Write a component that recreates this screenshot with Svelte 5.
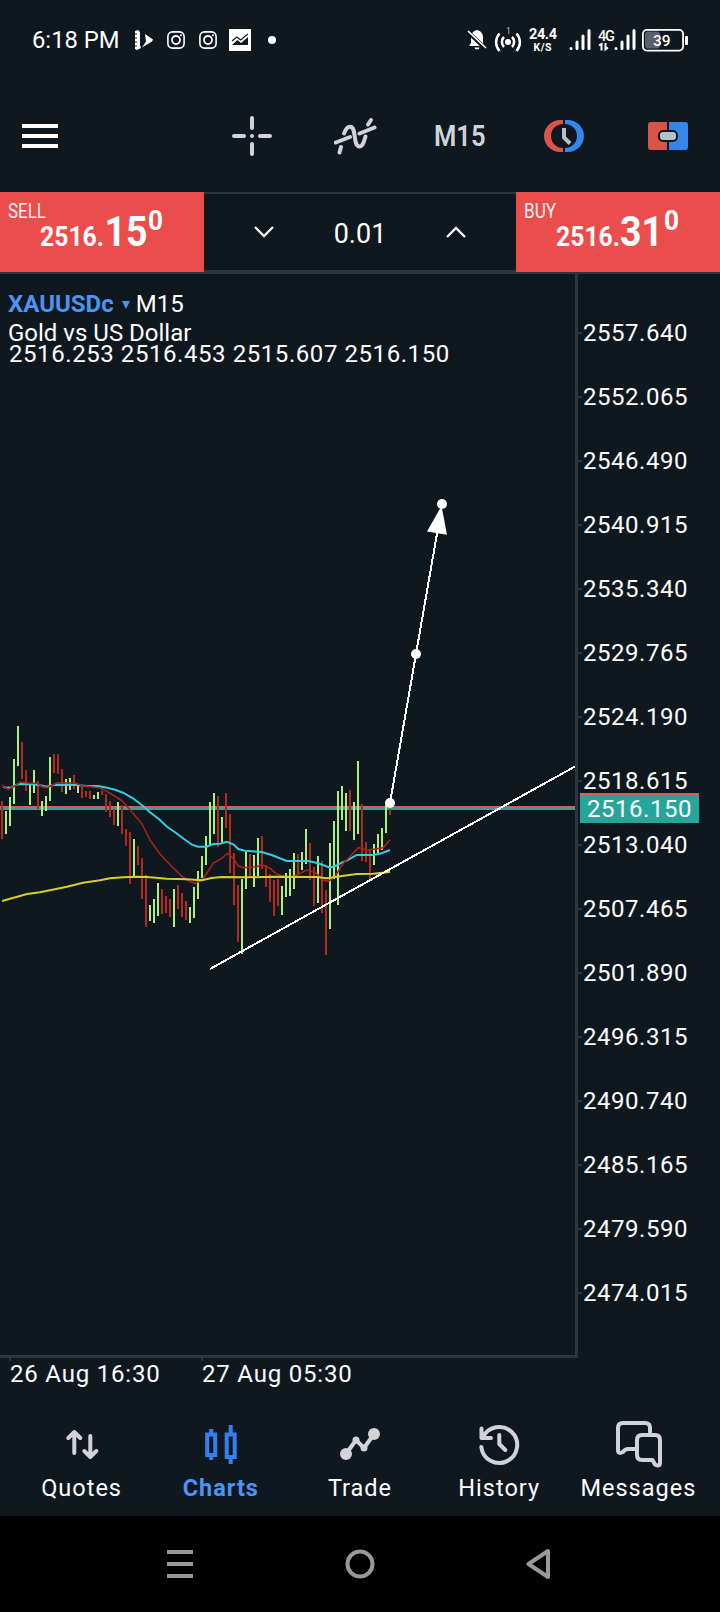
<script lang="ts">
	interface Tab {
		id: string;
		label: string;
	}

	const priceLabels = Array.from({ length: 16 }, (_, i) => (2557.64 - i * 5.575).toFixed(3));

	const tabs: Tab[] = [
		{ id: 'quotes', label: 'Quotes' },
		{ id: 'charts', label: 'Charts' },
		{ id: 'trade', label: 'Trade' },
		{ id: 'history', label: 'History' },
		{ id: 'messages', label: 'Messages' }
	];

	let activeTab = $state('charts');

	const sides = [
		{ label: 'SELL', labelWidth: 38, big: '15', bigX: 104.5, bigWidth: 43 },
		{ label: 'BUY', labelWidth: 32, big: '31', bigX: 104, bigWidth: 43 }
	];

	// direction, high, low (pixels below the top of the bar layer), one bar every 4px
	const bars = `
		r101-139 g111-134 g97-126 g59-104 g26-66 r42-79 r70-91 g84-105 g70-93 r81-109
		g101-116 g96-111 g57-101 r54-73 r54-74 r69-92 g79-94 g78-90 r75-89 g85-93
		r87-98 r91-97 r91-99 g95-99 g92-99 r91-95 r94-112 r101-117 r109-125 g102-126
		r105-134 r129-146 r132-184 g139-176 r146-165 r158-199 r175-227 g205-221 g199-223 g183-216
		r189-214 r196-213 r199-217 g189-227 r185-209 r193-217 r201-220 g207-223 g187-218 g171-199
		g156-178 g136-165 g102-146 g93-134 r96-147 g117-142 r93-128 r114-173 r153-205 r185-242
		g179-254 g152-189 r154-176 g155-187 g138-176 r136-169 r165-187 r174-202 r180-216 r179-206
		g186-215 g173-197 g169-196 g153-189 r154-174 g152-170 g129-164 r143-180 r167-206 g156-203
		r161-213 r190-255 g143-229 g121-179 g91-205 g86-120 g93-131 r90-131 g102-140 g61-134
		r104-161 r142-162 r149-181 g144-165 g134-155 g128-150 g105-133 r109-115`
		.trim()
		.split(/\s+/)
		.map((bar, i) => {
			const [high, low] = bar.slice(1).split('-').map(Number);
			return { up: bar[0] === 'g', x: i * 4 + 1, high, low };
		});
</script>

<div class="screen">
	<div class="status">
		<span class="time">6:18 PM</span>
		<svg class="bing" width="20" height="22" viewBox="0 0 20 22">
			<path d="M1 2 L4 1 L6 3 V16 L7 19 L3 21 L1 20Z" fill="#fff" />
			<path d="M0 5h3M0 9h3M0 13h3M0 17h3" stroke="#0f171f" />
			<path d="M11 5 L19 10.500 L18 12.500 L8 18.500 L12 12.500Z" fill="#fff" />
		</svg>
		{#each [0, 1] as n (n)}
			<svg class="insta" width="18" height="18" viewBox="0 0 18 18" fill="none" stroke="#fff">
				<rect x="0.9" y="0.9" width="16.2" height="16.2" rx="4.5" stroke-width="1.6" />
				<circle cx="9" cy="9" r="4" stroke-width="1.8" />
				<circle cx="14" cy="4.2" r="1" fill="#fff" stroke="none" />
			</svg>
		{/each}
		<svg width="22" height="22" viewBox="0 0 22 22">
			<rect width="22" height="22" fill="#fff" />
			<path d="M3 12 L8 8 L11.5 11 L19 5" fill="none" stroke="#0f171f" stroke-width="1.2" />
			<path d="M3 16 L8.5 11 L12 14 L19 8 V16Z" fill="#0f171f" />
		</svg>
		<i class="dot"></i>

		<div class="status-right">
			<svg width="22" height="24" viewBox="0 0 22 24">
				<path d="M11 2c-4 1-6 4-6 7v6l-2 3h16l-2-3V9c0-3-2-6-6-7zM8.500 19.500a2.500 2 0 0 0 5 0z" fill="#fff" />
				<path d="M2 4 L20 21" stroke="#0f171f" stroke-width="4" />
				<path d="M2 3 L20 20" stroke="#fff" stroke-width="1.700" />
			</svg>
			<svg class="hotspot" width="30" height="28" viewBox="0 0 30 28" fill="none" stroke="#fff" stroke-width="2.500">
				<circle cx="15" cy="16" r="3" fill="#fff" stroke="none" />
				<path d="M11 11a7 7 0 0 0 0 10M19 11a7 7 0 0 1 0 10M6.500 7.500a13 13 0 0 0 0 17.500M23.500 7.500a13 13 0 0 1 0 17.500" />
				<text x="13" y="8" font-size="8.500" fill="#bbc" stroke="none">1</text>
			</svg>
			<svg class="speed" width="32" height="28" viewBox="0 0 32 28" fill="#fff" font-weight="700">
				<text x="2" y="14" font-size="14.500" textLength="28">24.4</text>
				<text x="6.500" y="25.500" font-size="10.500" textLength="18">K/S</text>
			</svg>
			<svg class="signal" width="22" height="22" viewBox="0 0 22 22" stroke="#fff" stroke-width="3" stroke-linecap="round">
				<path d="M2 19.500v0M8 13v6.500M14 7v12.500M20 1.500v18" />
			</svg>
			<svg class="lte" width="38" height="24" viewBox="0 0 38 24">
				<text x="0" y="12.500" font-size="14.500" font-weight="500" fill="#fff" textLength="17">4G</text>
				<path d="M3.500 22.500v-6.500l-2.500 1.500M7.500 15v6.500l2.500-2" fill="none" stroke="#fff" stroke-width="2" />
				<path d="M18 20.500v0M24 14v6.500M30 8v12.500M36 2.500v18" stroke="#fff" stroke-width="3" stroke-linecap="round" />
			</svg>
			<svg class="battery" width="46" height="24" viewBox="0 0 46 24">
				<rect x="3" y="3.500" width="15" height="17" rx="3" fill="#596067" />
				<rect x="0.900" y="1.900" width="40.200" height="20.700" rx="4" fill="none" stroke="#fff" stroke-width="1.800" />
				<rect x="43" y="8" width="3" height="9" rx="1" fill="#fff" />
				<text x="11" y="17.700" font-size="15.500" font-weight="500" fill="#fff">39</text>
			</svg>
		</div>
	</div>

	<div class="toolbar">
		<button class="menu" aria-label="Menu"><i></i><i></i><i></i></button>
		<button aria-label="Crosshair">
			<svg width="40" height="40" viewBox="0 0 40 40" stroke="#d1d3d7" stroke-width="4" stroke-linecap="round">
				<path d="M20 2v10M20 28v10M2 20h10M28 20h10" />
				<path d="M20 20v0" />
			</svg>
		</button>
		<button aria-label="Indicators">
			<svg width="44" height="40" viewBox="0 0 44 40" fill="none" stroke="#d1d3d7" stroke-width="4" stroke-linecap="round">
				<path d="M5.500 36.500L7 31M10 17.500C11.500 13.500 13 10.700 16 10.700C23 10.700 18.500 30.500 25.500 30.500C29 30.500 30 25 31.500 20.500M34 8.500L37 4" />
				<path d="M1.800 26.500L16 21M25.500 17.500L40.500 11.500" />
			</svg>
		</button>
		<button aria-label="Timeframe">
			<svg width="80" height="60" viewBox="0 0 80 60">
				<text x="14" y="39.500" font-size="29.500" font-weight="600" fill="#d1d3d7" textLength="51.500" lengthAdjust="spacingAndGlyphs">M15</text>
			</svg>
		</button>
		<button aria-label="Trading time">
			<svg width="40" height="32" viewBox="0 0 40 32">
				<path d="M19 0h-3a16 16 0 0 0 0 32h3v-4a12 12 0 0 1 0-24z" fill="#d9534a" />
				<path d="M21 0h3a16 16 0 0 1 0 32h-3v-4a12 12 0 0 0 0-24z" fill="#3486ea" />
				<path d="M20 8v9.500l6 6" fill="none" stroke="#b3c1c9" stroke-width="4" />
			</svg>
		</button>
		<button aria-label="New order">
			<svg width="40" height="28" viewBox="0 0 40 28">
				<path d="M3 0h16v28H3a3 3 0 0 1-3-3V3a3 3 0 0 1 3-3z" fill="#d9534a" />
				<path d="M21 0h16a3 3 0 0 1 3 3v22a3 3 0 0 1-3 3H21z" fill="#3486ea" />
				<rect x="11" y="9" width="18" height="10" rx="4" fill="#b3c1c9" stroke="#0f171f" stroke-width="2" />
			</svg>
		</button>
	</div>

	<div class="deal">
		{#each sides as side, i (side.label)}
			<button class="side" class:buy={i === 1}>
				<svg width="204" height="80" viewBox="0 0 204 80" fill="#fff">
					<text x="8" y="25.500" font-size="19.500" opacity="0.9" textLength={side.labelWidth} lengthAdjust="spacingAndGlyphs">{side.label}</text>
					<g font-weight="700">
						<text x="40" y="53.700" font-size="27" textLength="64" lengthAdjust="spacingAndGlyphs">2516.</text>
						<text x={side.bigX} y="53.700" font-size="43" textLength={side.bigWidth} lengthAdjust="spacingAndGlyphs">{side.big}</text>
						<text x="148" y="38" font-size="27" textLength="15" lengthAdjust="spacingAndGlyphs">0</text>
					</g>
				</svg>
			</button>
		{/each}
		<div class="volume">
			<svg width="22" height="14" viewBox="0 0 22 14"><path d="M2 2l9 9 9-9" /></svg>
			<span>0.01</span>
			<svg width="22" height="14" viewBox="0 0 22 14"><path d="M2 12l9-9 9 9" /></svg>
		</div>
	</div>

	<div class="chart">
		<div class="plot">
			<svg width="575" height="1081" viewBox="0 274 575 1081" fill="none">
				<path d="M0 807h575" stroke="#dd5a55" stroke-width="2" />
				<path d="M0 809h575" stroke="#3f9a98" stroke-width="2" />
				<g transform="translate(0 700)">
					{#each bars as bar (bar.x)}
						<rect x={bar.x} y={bar.high} width="2" height={bar.low - bar.high} fill={bar.up ? '#aeee7c' : '#b0291f'} />
					{/each}
					<g stroke-width="2">
						<polyline stroke="#31cde0" points="3,86.700 7,87.700 12,87.300 15,85.300 20,84 33,84.300 40,85.300 47,86.700 52,85.300 57,84.700 77,85 87,86 98,86 107,87.700 115,89.700 123,92.700 133,98.300 143,106 150,112.300 160,120 167,126.700 175,132.300 183,138.300 192,144.700 198,146.700 206.700,146.700 213.300,144 220,143.700 226.700,141.700 233.300,144.300 238.300,149 245,150.700 261.700,152 271.700,155 286.700,161 308.300,161 318.300,163.300 330,167.700 336.700,165.300 341.700,162.700 346.700,160.700 356.700,155 373.300,155 381.700,153.300 390,150" />
						<polyline stroke="#a5231a" stroke-width="1.600" points="2,85 8,89.300 15,86 20,82 28,83 37,83.300 42,86.700 47,87.700 52,85.300 57,82.700 75,83 83,85.700 100,88 110,93.300 122,100.700 132,112 142,124 150,140 160,154 172,166.700 183,177.300 190,181.700 195,183.300 201.700,180.300 206.700,173.300 213.300,163.300 221.700,158.300 227.300,153.300 233.300,158.300 238.300,166 243.300,167.700 256.700,166.700 261.700,164.700 270,168.300 276.700,174 285,176.700 293.300,176.700 306.700,170 315,172.300 323.300,180 328.300,181.300 335,176.700 343.300,163.300 350,156.700 358.300,147.700 366.700,150 375,149 383.300,147.700 390,139.700" />
						<polyline stroke="#d3cf2c" points="2,201 27,194 40,192.300 67,186.700 83,182.700 100,180.300 110,178.300 123,177.300 137,176.700 147,177 167,178.700 187,179.300 201.700,180.300 211.700,178 221.700,177 246.700,177.300 273.300,176.700 316.700,177 326.700,178.300 336.700,176.700 356.700,174 373.300,173.700 390,172" />
					</g>
				</g>
				<path d="M210 969L575 766.500M390 803L442 505" stroke="#fff" stroke-width="2" shape-rendering="crispEdges" />
				<g fill="#fff">
					<path d="M441.500 506L427 531.500 447 534.800z" />
					<circle cx="390" cy="803" r="5" />
					<circle cx="416" cy="654" r="5" />
					<circle cx="442" cy="504" r="5" />
				</g>
			</svg>
			<div class="legend">
				<div class="symbol"><b>XAUUSDc</b><i></i>M15</div>
				<div class="name">Gold vs US Dollar</div>
				<div class="ohlc">2516.253 2516.453 2515.607 2516.150</div>
			</div>
		</div>
		<div class="prices">
			{#each priceLabels as price (price)}
				<div class="price">{price}</div>
			{/each}
			<div class="current">2516.150</div>
		</div>
	</div>
	<div class="times">
		<span>26 Aug 16:30</span>
		<span>27 Aug 05:30</span>
	</div>

	<nav>
		{#each tabs as tab (tab.id)}
			<button class="tab" class:active={activeTab === tab.id} onclick={() => (activeTab = tab.id)}>
				<svg width="52" height="50" viewBox="0 0 52 50" fill="none" stroke="currentColor" stroke-width="4" stroke-linecap="round" stroke-linejoin="round">
					{#if tab.id === 'quotes'}
						<path d="M18.300 34V14M12.300 19l6-6 6 6M34.300 17v20M28.300 32l6 6 6-6" />
					{:else if tab.id === 'charts'}
						<g stroke-linecap="butt" stroke-linejoin="miter">
							<path d="M12.200 15.500h8v20.500h-8zM31.700 15.500h8v22.500h-8z" />
							<path d="M16.200 10v4M16.200 37v4M35.700 6v8M35.700 39v6" />
						</g>
					{:else if tab.id === 'trade'}
						<path d="M12 35L22 21l8 8L40 15" />
						<path d="M22 21v0M30 29v0" stroke-width="7" />
						<circle cx="12" cy="35" r="4" fill="currentColor" />
						<circle cx="40" cy="15" r="4" fill="currentColor" />
					{:else if tab.id === 'history'}
						<path d="M8.300 28a18 18 0 1 0 1.500-9.500M8.500 9.500v9.500h9.500M26.300 16v9l6 6" />
					{:else}
						<path d="M22.500 30H16q-3 0-5 3-5 2.500-5-2V9q0-5 5-5h22q5 0 5 5v4" />
						<path d="M30 16h13q5 0 5 5v23q0 4-5 1.500l-2.500-4.500H30q-5 0-5-5V21q0-5 5-5z" />
					{/if}
				</svg>
				<span>{tab.label}</span>
			</button>
		{/each}
	</nav>

	<div class="system">
		<svg width="28" height="30" viewBox="0 0 28 30"><path d="M1 3h26M1 15h26M1 27h26" /></svg>
		<svg width="30" height="30" viewBox="0 0 30 30"><circle cx="15" cy="15" r="12.500" /></svg>
		<svg width="28" height="32" viewBox="0 0 28 32"><path d="M22 3v26L2.500 16z" stroke-linejoin="round" /></svg>
	</div>
</div>

<style>
	:global(body) {
		background: #0f171f;
	}

	.screen {
		width: 720px;
		height: 1612px;
		display: flex;
		flex-direction: column;
		overflow: hidden;
		background: #0f171f;
		color: #fff;
		font-family: Roboto, sans-serif;
		font-size: 24px;
	}

	svg {
		display: block;
		flex: none;
	}

	button {
		padding: 0;
		border: none;
		background: none;
		color: inherit;
		font: inherit;
	}

	.status {
		height: 80px;
		display: flex;
		align-items: center;
		padding: 0 32px;
	}

	.time {
		width: 102px;
		font-size: 23.8px;
		white-space: nowrap;
		line-height: 30px;
	}

	.bing {
		margin-right: 13px;
	}

	.insta {
		margin-right: 14px;
	}

	.insta + svg:not(.insta) {
		margin-left: -2px;
	}

	.dot {
		width: 8px;
		height: 8px;
		margin-left: 17px;
		border-radius: 50%;
		background: #fff;
	}

	.status-right {
		display: flex;
		align-items: center;
		margin-left: auto;
	}

	.hotspot {
		margin-left: 5px;
	}

	.speed {
		margin: 0 10px 3px 4px;
	}

	.lte {
		margin-left: 7px;
	}

	.battery {
		margin-left: 6px;
	}

	.toolbar {
		height: 112px;
		display: grid;
		grid-template-columns: 200px repeat(5, 104px);
		align-items: center;
		justify-items: center;
	}

	.menu {
		justify-self: start;
		margin-left: 22px;
		width: 36px;
		display: grid;
		gap: 6px;
	}

	.menu i {
		height: 4px;
		background: #fff;
	}

	.deal {
		height: 82px;
		display: flex;
		border-bottom: 2px solid #2e3440;
		margin-bottom: -2px;
		box-sizing: border-box;
	}

	.side {
		width: 204px;
		height: 80px;
		background: #ea4d4b;
	}

	.buy {
		order: 3;
	}

	.volume {
		order: 2;
		flex: 1;
		display: flex;
		align-items: center;
		justify-content: space-between;
		padding: 0 49px;
		border-top: 2px solid #2e3440;
		border-bottom: 2px solid #2e3440;
		font-size: 27px;
	}

	.volume span {
		padding-top: 3px;
	}

	.volume path {
		fill: none;
		stroke: #fff;
		stroke-width: 2.3;
	}

	.chart {
		height: 1086px;
		display: flex;
		box-sizing: border-box;
		padding-top: 2px;
	}

	.plot {
		position: relative;
		width: 575px;
		height: 1081px;
		border-right: 3px solid #2e3440;
		border-bottom: 3px solid #2e3440;
	}

	.legend {
		position: absolute;
		left: 8px;
		top: 16px;
		line-height: 29px;
		white-space: nowrap;
	}

	.symbol {
		display: flex;
		align-items: center;
	}

	.symbol b {
		color: #4d94f0;
	}

	.symbol i {
		margin: 0 6px 0 8px;
		border: 4px solid transparent;
		border-top: 8px solid #4d94f0;
		border-bottom: 0;
	}

	.ohlc {
		margin-top: -8px;
		margin-left: 1px;
		letter-spacing: 0.57px;
	}

	.prices {
		position: relative;
		flex: 1;
		padding-top: 27px;
		letter-spacing: 0.52px;
	}

	.price {
		display: flex;
		align-items: center;
		height: 64px;
	}

	.price::before {
		content: '';
		width: 4px;
		height: 2px;
		margin-right: 1px;
		background: #2e3440;
	}

	.current {
		position: absolute;
		left: 2px;
		top: 519px;
		width: 119px;
		height: 30px;
		box-sizing: border-box;
		padding-left: 7px;
		border-top: 2px solid #d5605a;
		background: #26a69a;
		line-height: 28px;
	}

	.times {
		height: 32px;
		display: flex;
		padding-left: 9px;
		letter-spacing: 0.8px;
	}

	.times span {
		position: relative;
		width: 191px;
		padding-left: 1px;
		line-height: 32px;
	}

	.times span::before {
		content: '';
		position: absolute;
		left: 0;
		top: 0;
		width: 2px;
		height: 3px;
		background: #2e3440;
	}

	nav {
		height: 126px;
		display: grid;
		grid-template-columns: repeat(5, 1fr);
		padding: 0 12px;
		background: #0f1820;
	}

	.tab {
		display: flex;
		flex-direction: column;
		align-items: center;
		padding-top: 29px;
		color: #d1d3d7;
		letter-spacing: 1px;
	}

	.tab span {
		margin-top: 4px;
		color: #fff;
		font-size: 23.5px;
		line-height: 30px;
	}

	.active {
		color: #3580ee;
	}

	.active span {
		color: #4d94f0;
		font-weight: 700;
	}

	.system {
		flex: 1;
		display: flex;
		align-items: center;
		justify-content: space-between;
		padding: 0 166px;
		background: #000;
	}

	.system svg {
		fill: none;
		stroke: #999;
		stroke-width: 4;
	}
</style>
